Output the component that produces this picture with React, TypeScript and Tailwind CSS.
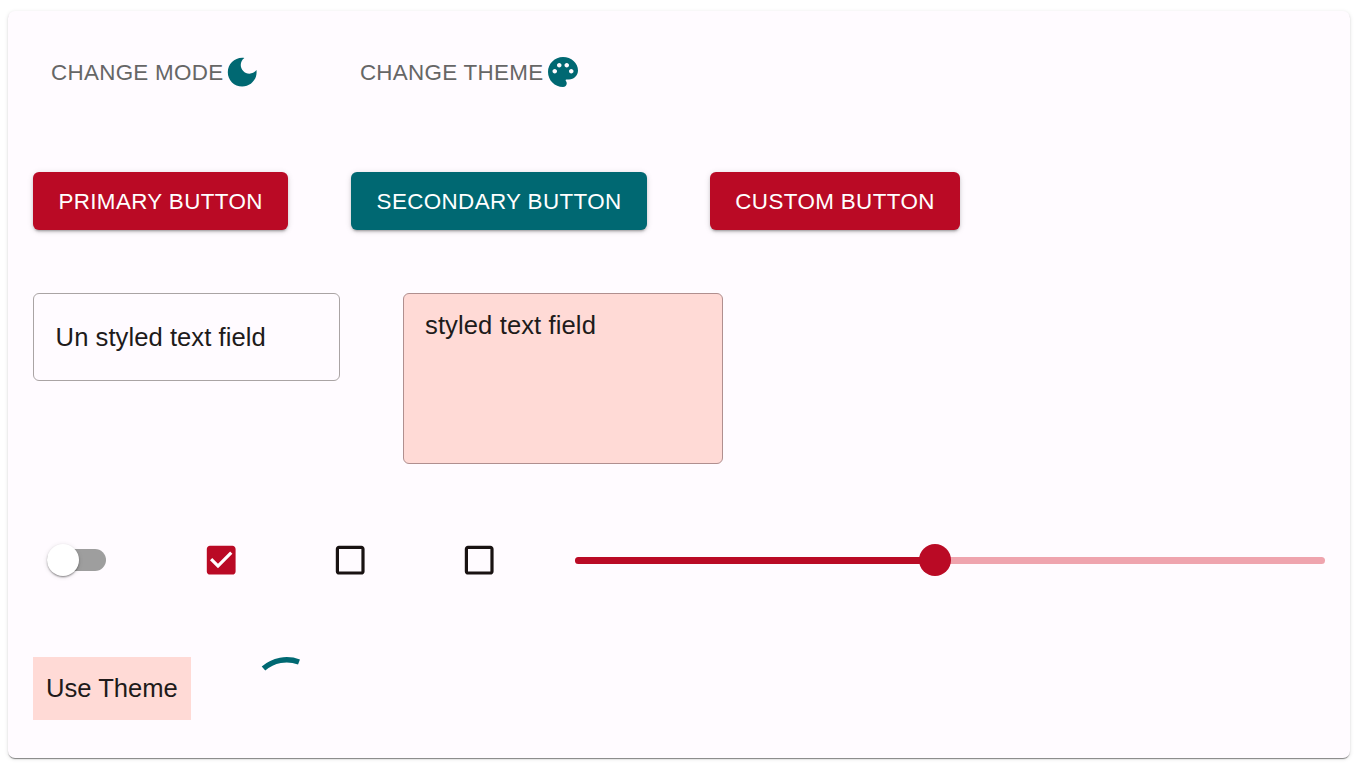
const FONT = "font-['Liberation_Sans',Arial,sans-serif]";

function ModeLabel({ label, path, iconClass }: { label: string; path: string; iconClass: string }) {
  return (
    <div className="flex items-center">
      <span className="text-[22.4px] leading-[39px] tracking-[0.3px] uppercase text-[#666666]">{label}</span>
      <svg viewBox="0 0 24 24" className={`fill-[#006872] ${iconClass}`}>
        <path d={path} />
      </svg>
    </div>
  );
}

function ThemeButton({ label, color }: { label: string; color: string }) {
  return (
    <button
      className={`h-[58px] px-[25.4px] pt-[2px] rounded-[6px] text-white text-[22.4px] tracking-[0.38px] uppercase shadow-[0_3px_2px_-2px_rgba(0,0,0,0.2),0_2px_3px_0_rgba(0,0,0,0.14),0_1px_6px_0_rgba(0,0,0,0.12)] ${color}`}
    >
      {label}
    </button>
  );
}

function Box({ checked }: { checked?: boolean }) {
  return (
    <svg viewBox="0 0 24 24" className={`w-[38.4px] h-[38.4px] ${checked ? "fill-[#ba0a25]" : "fill-[#191212]"}`}>
      {checked ? (
        <>
          <rect x="6" y="6" width="12" height="12" className="fill-white" />
          <path d="M19 3H5c-1.11 0-2 .9-2 2v14c0 1.1.89 2 2 2h14c1.11 0 2-.9 2-2V5c0-1.1-.89-2-2-2zm-9 14l-5-5 1.41-1.41L10 14.17l7.59-7.59L19 8l-9 9z" />
        </>
      ) : (
        <path d="M19 5v14H5V5h14m0-2H5c-1.1 0-2 .9-2 2v14c0 1.1.9 2 2 2h14c1.1 0 2-.9 2-2V5c0-1.1-.9-2-2-2z" />
      )}
    </svg>
  );
}

export default function App() {
  return (
    <div className={`min-h-screen bg-white pt-[11px] pb-3 px-2 ${FONT}`}>
      <div className="h-[747px] rounded-[7px] bg-[#fffbff] pl-[25px] pr-[25px] pt-[42px] shadow-[0_2px_1px_-1px_rgba(0,0,0,0.3),0_1px_1px_0_rgba(0,0,0,0.2),0_1px_4px_0_rgba(0,0,0,0.12)]">
        <div className="flex items-center pl-[18px] gap-[99px]">
          <ModeLabel
            label="Change Mode"
            iconClass="-ml-px w-[38.4px] h-[38.4px]"
            path="M12 3c-4.97 0-9 4.03-9 9s4.03 9 9 9 9-4.03 9-9c0-.46-.04-.92-.1-1.36-.98 1.37-2.58 2.26-4.4 2.26-2.98 0-5.4-2.42-5.4-5.4 0-1.81.89-3.42 2.26-4.4-.44-.06-.9-.1-1.36-.1z"
          />
          <ModeLabel
            label="Change Theme"
            iconClass="ml-[2px] -mt-px w-[36px] h-[36px]"
            path="M12 2C6.49 2 2 6.49 2 12s4.49 10 10 10c1.38 0 2.5-1.12 2.5-2.5 0-.61-.23-1.2-.64-1.67-.08-.1-.13-.21-.13-.33 0-.28.22-.5.5-.5H16c3.31 0 6-2.69 6-6 0-4.96-4.49-9-10-9zm5.5 11c-.83 0-1.5-.67-1.5-1.5s.67-1.5 1.5-1.5 1.5.67 1.5 1.5-.67 1.5-1.5 1.5zm-3-4c-.83 0-1.5-.67-1.5-1.5S13.67 6 14.5 6s1.5.67 1.5 1.5S15.33 9 14.5 9zM5 11.5c0-.83.67-1.5 1.5-1.5s1.5.67 1.5 1.5S7.33 13 6.5 13 5 12.33 5 11.5zm6-4c0 .83-.67 1.5-1.5 1.5S8 8.33 8 7.5 8.67 6 9.5 6s1.5.67 1.5 1.5z"
          />
        </div>

        <div className="flex items-start gap-[63px] mt-[80px]">
          <ThemeButton label="Primary Button" color="bg-[#ba0a25]" />
          <ThemeButton label="Secondary Button" color="bg-[#006872]" />
          <ThemeButton label="Custom Button" color="bg-[#ba0a25]" />
        </div>

        <div className="flex items-start gap-[63px] mt-[63px] text-[25.6px] text-[#201a1a]">
          <div className="w-[307px] h-[88px] flex items-center pl-[21.6px] tracking-[0.05px] rounded-[6px] border border-[#aaa4a4]">
            Un styled text field
          </div>
          <div className="w-[320px] h-[171px] pl-[21px] pt-[15px] tracking-[0.1px] rounded-[6px] border border-[#b08f8f] bg-[#ffdad6] leading-[33px]">
            styled text field
          </div>
        </div>

        <div className="flex items-center mt-[77px] h-[38px]">
          {/* switch */}
          <div className="relative w-[59px] h-[22px] ml-[14px] rounded-full bg-[#9e9e9e]">
            <span className="absolute left-0 top-[-5px] w-8 h-8 rounded-full bg-white shadow-[0_2px_2px_-1px_rgba(0,0,0,0.3),0_1px_2px_0_rgba(0,0,0,0.2),0_1px_5px_0_rgba(0,0,0,0.12)]" />
          </div>
          <div className="ml-[96px] flex gap-[90.7px]">
            <Box checked />
            <Box />
            <Box />
          </div>
          {/* slider */}
          <div className="relative ml-[76px] w-[750px] h-[7px] rounded-full bg-[#efa4ae]">
            <div className="h-full w-[360px] rounded-full bg-[#ba0a25]" />
            <span className="absolute left-[344px] top-[-13px] w-8 h-8 rounded-full bg-[#ba0a25]" />
          </div>
        </div>

        <div className="flex items-start mt-[78px]">
          <div className="px-[13px] h-[63px] flex items-center bg-[#ffdad6] text-[25.6px] text-[#201a1a]">Use Theme</div>
          <svg viewBox="0 0 44 20" className="ml-[67px] -mt-[3px] w-[44px] h-[20px] fill-none stroke-[#006872] stroke-[5.4px]">
            <path d="M5.5 14.5A35 35 0 0 1 41 8" />
          </svg>
        </div>
      </div>
    </div>
  );
}
